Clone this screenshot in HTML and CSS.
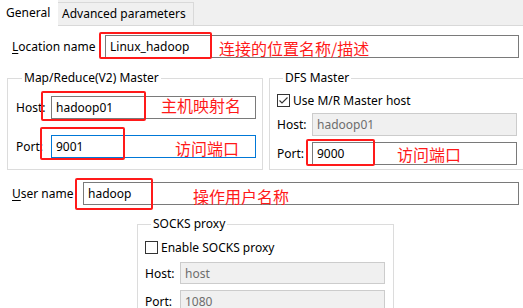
FILE: index.html
```html
<!DOCTYPE html>
<html>
<head>
<meta charset="utf-8">
<link rel="stylesheet" href="styles.css">
</head>
<body>
<div class="page">
  <div class="tabs">
    <div class="tab active">General</div>
    <div class="tab">Advanced parameters</div>
  </div>

  <div class="row loc-row">
    <label class="lbl lbl-loc"><u>L</u>ocation name</label>
    <div class="input wide">Linux_hadoop</div>
  </div>

  <div class="groups">
    <fieldset class="group mr">
      <legend>Map/Reduce(V2) Master</legend>
      <div class="frow">
        <label class="lbl lbl-s">Host:</label>
        <div class="input mr-in">hadoop01</div>
      </div>
      <div class="frow mr-port">
        <label class="lbl lbl-s">Port:</label>
        <div class="input mr-in focus">9001</div>
      </div>
    </fieldset>
    <fieldset class="group dfs">
      <legend>DFS Master</legend>
      <div class="check-row">
        <span class="cb"><svg width="13" height="13" viewBox="0 0 13 13"><rect x="0.5" y="0.5" width="12" height="12" fill="#fff" stroke="#333"/><path d="M2.5 6.5 L5 9 L10.5 3.5" fill="none" stroke="#333" stroke-width="1.1"/></svg></span>
        <span>Use M/R Master host</span>
      </div>
      <div class="frow dfs-host">
        <label class="lbl lbl-d">Host:</label>
        <div class="input dfs-in disabled">hadoop01</div>
      </div>
      <div class="frow dfs-port">
        <label class="lbl lbl-d">Port:</label>
        <div class="input dfs-in">9000</div>
      </div>
    </fieldset>
  </div>

  <div class="row user-row">
    <label class="lbl lbl-user"><u>U</u>ser name</label>
    <div class="input user-in">hadoop</div>
  </div>

  <fieldset class="group socks">
    <legend>SOCKS proxy</legend>
    <div class="check-row">
      <span class="cb"><svg width="13" height="13" viewBox="0 0 13 13"><rect x="0.5" y="0.5" width="12" height="12" fill="#fff" stroke="#333"/></svg></span>
      <span>Enable SOCKS proxy</span>
    </div>
    <div class="frow socks-host">
      <label class="lbl lbl-k">Host:</label>
      <div class="input socks-in disabled">host</div>
    </div>
    <div class="frow socks-port">
      <label class="lbl lbl-k">Port:</label>
      <div class="input socks-in disabled">1080</div>
    </div>
  </fieldset>

  <div class="notes">
    <div class="rbox rb-loc"></div>
    <div class="rbox rb-host"></div>
    <div class="rbox rb-port"></div>
    <div class="rbox rb-dport"></div>
    <div class="rbox rb-user"></div>
    <div class="rtext rt-loc">连接的位置名称/描述</div>
    <div class="rtext rt-host">主机映射名</div>
    <div class="rtext rt-port">访问端口</div>
    <div class="rtext rt-dport">访问端口</div>
    <div class="rtext rt-user">操作用户名称</div>
  </div>
</div>
</body>
</html>
```
FILE: styles.css
```css
* { box-sizing: border-box; }
html, body { margin: 0; padding: 0; background: #fff; }
body {
  width: 523px;
  height: 308px;
  overflow: hidden;
  font-family: "Noto Sans", "Noto Sans CJK SC", sans-serif;
  font-size: 12px;
  color: #000;
}
.page { position: relative; width: 523px; height: 308px; overflow: hidden; }

.tabs {
  display: flex;
  align-items: flex-end;
  height: 26px;
  background: #f0f0f0;
  border-bottom: 1px solid #d9d9d9;
}
.tab {
  height: 23px;
  line-height: 21px;
  padding-left: 4px;
  width: 136px;
  border-top: 1px solid #d9d9d9;
  border-right: 1px solid #d9d9d9;
}
.tab.active {
  width: 58px;
  height: 27px;
  line-height: 27px;
  padding-left: 6px;
  background: #fff;
  border: none;
  margin-bottom: -1px;
}

.row { display: flex; align-items: center; }
.lbl { white-space: nowrap; }
.lbl u { text-decoration: underline; text-underline-offset: 2px; }

.input {
  height: 23px;
  line-height: 21px;
  border: 1px solid #7a7a7a;
  background: #fff;
  padding-left: 4px;
  white-space: nowrap;
  overflow: hidden;
  flex-shrink: 0;
}
.input.focus { border-color: #0078d7; }
.input.disabled { background: #f0f0f0; border-color: #cccccc; color: #6d6d6d; }

.loc-row { margin-top: 9px; padding-left: 12px; }
.lbl-loc { width: 93px; flex-shrink: 0; }
.wide { width: 414px; }

.groups { display: flex; margin-top: 12px; padding-left: 7px; }
.group {
  margin: 0;
  border: 1px solid #dcdcdc;
  min-width: 0;
  flex-shrink: 0;
}
.group legend {
  padding: 0 2px;
  margin-left: 6px;
  line-height: 16px;
}
.mr { width: 256px; height: 100px; padding: 10px 0 0 8px; }
.dfs { width: 270px; height: 100px; margin-left: 6px; padding: 6px 0 0 7px; }

.frow { display: flex; align-items: center; }
.lbl-s { width: 35px; flex-shrink: 0; }
.mr-in { width: 205px; }
.mr-port { margin-top: 16px; }

.check-row { display: flex; align-items: center; height: 16px; }
.cb { width: 13px; height: 13px; margin-right: 3px; display: flex; flex-shrink: 0; }
.cb svg { display: block; }

.lbl-d { width: 35px; flex-shrink: 0; }
.dfs-in { width: 205px; }
.dfs-host { margin-top: 5px; }
.dfs-port { margin-top: 6px; }

.user-row { margin-top: 12px; padding-left: 12px; }
.lbl-user { width: 71px; flex-shrink: 0; }
.user-in { width: 436px; }

.socks { width: 257px; height: 120px; margin: 11px 0 0 137px; padding: 7px 0 0 7px; }
.lbl-k { width: 35px; flex-shrink: 0; }
.socks-in { width: 205px; height: 22px; }
.socks-host { margin-top: 7px; }
.socks-port { margin-top: 6px; }

.notes { position: absolute; left: 0; top: 0; width: 523px; height: 308px; pointer-events: none; }
.rbox { position: absolute; border: 2px solid #ff1a1a; border-radius: 2px; }
.rb-loc { left: 99px; top: 32px; width: 113px; height: 27px; }
.rb-host { left: 41px; top: 91px; width: 105px; height: 30px; }
.rb-port { left: 40px; top: 127px; width: 85px; height: 33px; }
.rb-dport { left: 306px; top: 139px; width: 69px; height: 27px; }
.rb-user { left: 75px; top: 178px; width: 78px; height: 32px; }

.rtext {
  position: absolute;
  font-family: "Noto Sans CJK SC", sans-serif;
  font-size: 16px;
  line-height: 16px;
  color: #ff1a1a;
  white-space: nowrap;
}
.rt-loc { left: 219px; top: 40px; }
.rt-host { left: 161px; top: 97px; }
.rt-port { left: 175px; top: 140px; }
.rt-dport { left: 397px; top: 146px; }
.rt-user { left: 193px; top: 188px; }
```
